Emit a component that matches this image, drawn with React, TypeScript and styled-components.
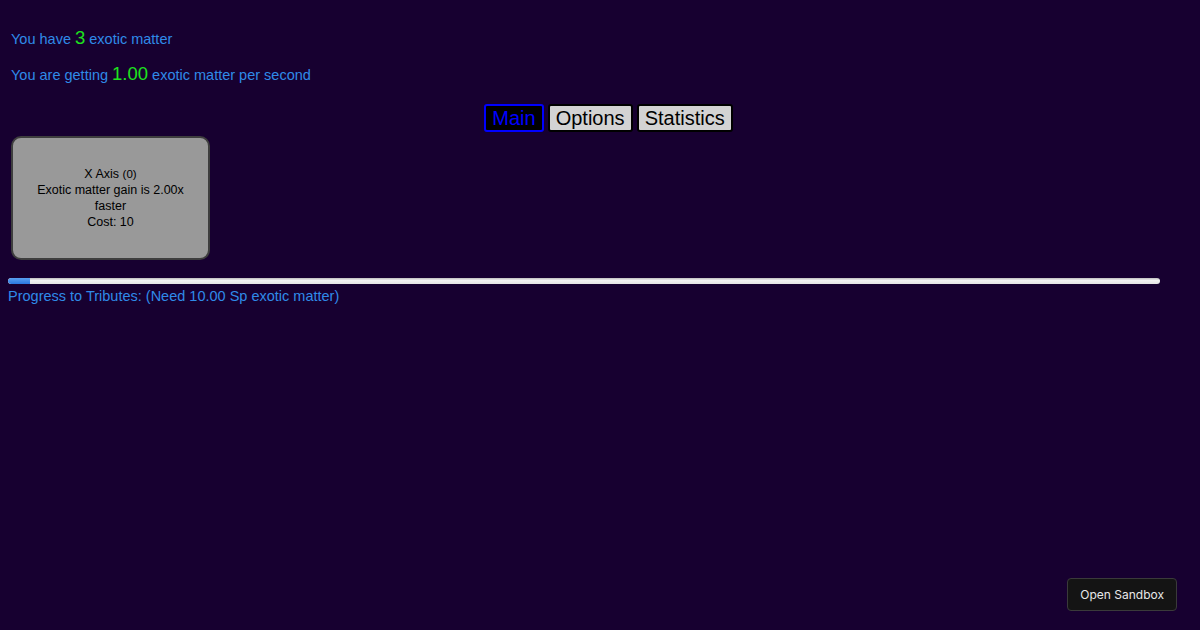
import React from "react";
import styled, { createGlobalStyle } from "styled-components";

const GlobalStyle = createGlobalStyle`
  html, body {
    background-color: #170030;
  }
  body {
    margin: 8px;
    font-family: "Liberation Sans", Arial, sans-serif;
  }
`;

const Stats = styled.div`
  padding: 18px 3px 0;
  color: #2f8be8;
  font-size: 14.5px;
`;

const StatLine = styled.p`
  margin: 0 0 12px;
  height: 24px;
  line-height: 24px;
`;

const Amount = styled.span`
  color: #1ee31e;
  font-size: 18.5px;
`;

const TabRow = styled.div`
  display: flex;
  justify-content: center;
  gap: 4px;
  padding-left: 17px;
  margin-top: 18px;
`;

const TabButton = styled.button<{ $active?: boolean }>`
  font-family: "Liberation Sans", Arial, sans-serif;
  font-size: 20px;
  line-height: 23px;
  padding: 1px 6px 0;
  border-radius: 3px;
  border: 2px solid ${p => (p.$active ? "#0000ff" : "#000")};
  background-color: ${p => (p.$active ? "#000" : "#d3d3d3")};
  color: ${p => (p.$active ? "#0000ff" : "#000")};
  cursor: pointer;
`;

const UpgradeGrid = styled.div`
  display: flex;
  padding: 4px 3px 0;
`;

const UpgradeCard = styled.button`
  width: 199px;
  height: 124px;
  box-sizing: border-box;
  border: 2px solid #3e3e3e;
  border-radius: 10px;
  background-color: #999;
  color: #000;
  font-family: "Liberation Sans", Arial, sans-serif;
  font-size: 12.5px;
  line-height: 16px;
  padding: 0 12px;
  display: flex;
  flex-direction: column;
  align-items: center;
  justify-content: center;
  text-align: center;
`;

const Small = styled.span`
  font-size: 11.5px;
`;

const ProgressTrack = styled.div`
  margin-top: 18px;
  width: 1152px;
  height: 6px;
  box-sizing: border-box;
  border-radius: 3px;
  background: linear-gradient(#bdbdbd, #f2f2f2 40%, #e4e4e4);
  overflow: hidden;
`;

const ProgressFill = styled.div`
  height: 100%;
  background: linear-gradient(#5aa0f0, #2a78e0);
  border-radius: 3px 0 0 3px;
`;

const ProgressLabel = styled.div`
  color: #2f8be8;
  font-size: 14.5px;
  line-height: 17px;
  margin-top: 4px;
`;

const SandboxButton = styled.button`
  position: fixed;
  right: 23px;
  bottom: 19px;
  height: 33px;
  padding: 0 12px;
  border: 1px solid #3a3a3a;
  border-radius: 4px;
  background-color: #141414;
  color: #e8e8e8;
  font-family: Inter, "Liberation Sans", sans-serif;
  font-size: 12px;
  cursor: pointer;
`;

export default function App() {
  const progress = 0.019;
  return (
    <>
      <GlobalStyle />
      <Stats>
        <StatLine>
          You have <Amount>3</Amount> exotic matter
        </StatLine>
        <StatLine>
          You are getting <Amount>1.00</Amount> exotic matter per second
        </StatLine>
      </Stats>
      <TabRow>
        <TabButton $active>Main</TabButton>
        <TabButton>Options</TabButton>
        <TabButton>Statistics</TabButton>
      </TabRow>
      <UpgradeGrid>
        <UpgradeCard>
          <span>
            X Axis <Small>(0)</Small>
          </span>
          <span>Exotic matter gain is 2.00x faster</span>
          <span>Cost: 10</span>
        </UpgradeCard>
      </UpgradeGrid>
      <ProgressTrack>
        <ProgressFill style={{ width: `${progress * 100}%` }} />
      </ProgressTrack>
      <ProgressLabel>Progress to Tributes: (Need 10.00 Sp exotic matter)</ProgressLabel>
      <SandboxButton>Open Sandbox</SandboxButton>
    </>
  );
}
